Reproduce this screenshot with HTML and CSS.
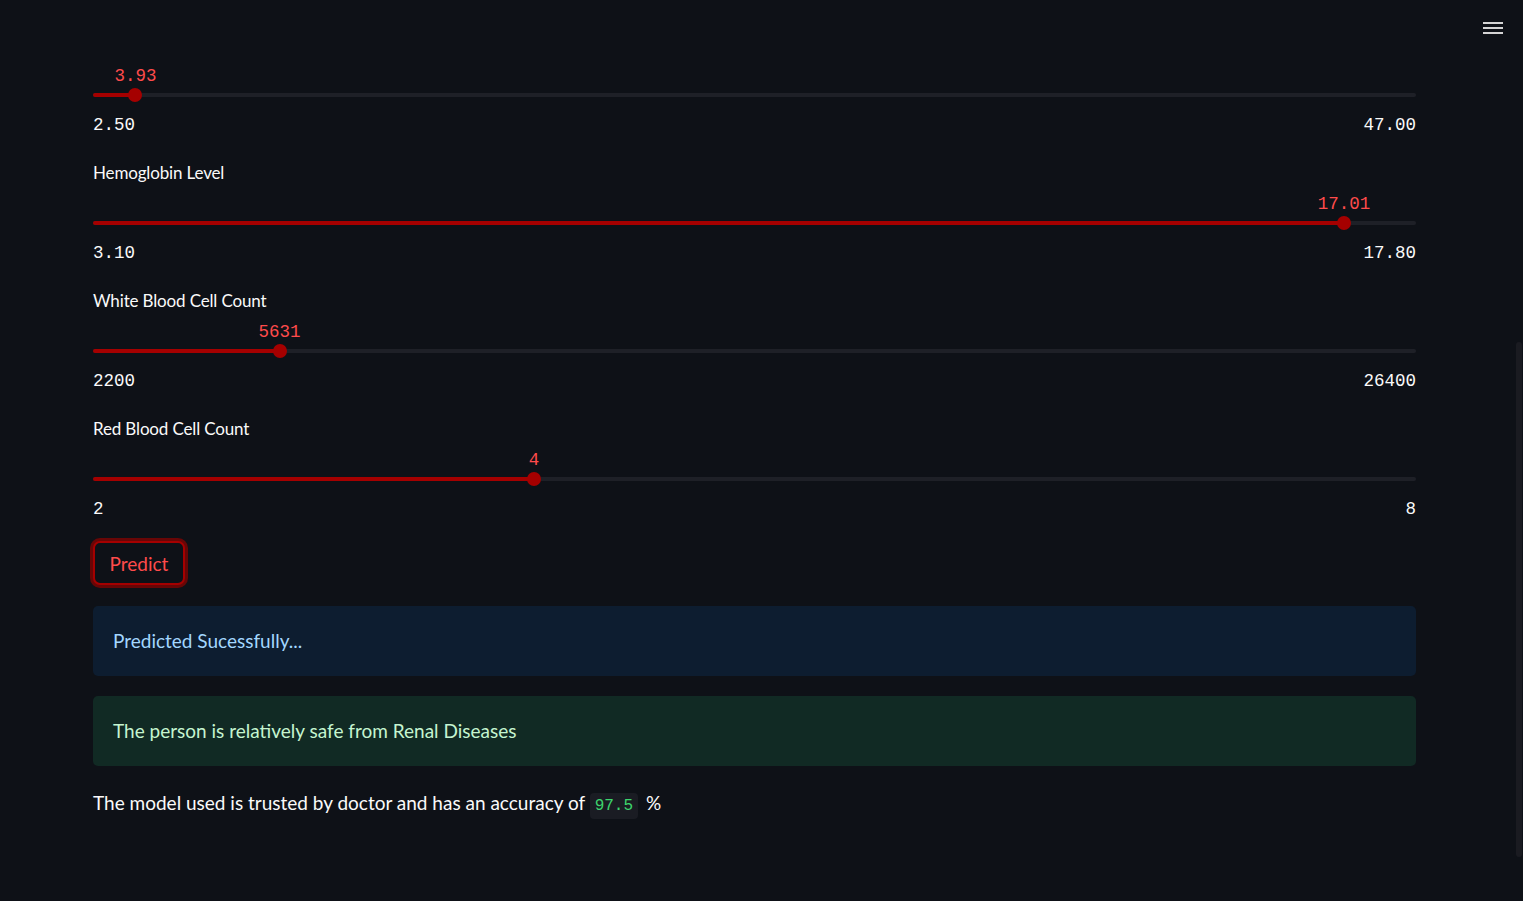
FILE: index.html
```html
<!DOCTYPE html>
<html>
<head>
<meta charset="utf-8">
<link rel="stylesheet" href="styles.css">
</head>
<body>
<div class="menu">
  <svg width="20" height="16" viewBox="0 0 20 16"><rect x="0" y="2" width="20" height="2" fill="#d4d4d4"/><rect x="0" y="7" width="20" height="2" fill="#d4d4d4"/><rect x="0" y="12" width="20" height="2" fill="#d4d4d4"/></svg>
</div>
<div class="scroll-thumb"></div>
<main class="main">
  <div class="slider-block first">
    <div class="slider">
      <div class="value-row"><span class="value" style="left:3.21%">3.93</span></div>
      <div class="track-wrap">
        <div class="track"></div>
        <div class="fill" style="width:3.21%"></div>
        <div class="thumb" style="left:3.21%"></div>
      </div>
      <div class="ticks"><span>2.50</span><span>47.00</span></div>
    </div>
  </div>

  <div class="slider-block">
    <div class="label">Hemoglobin Level</div>
    <div class="slider">
      <div class="value-row"><span class="value" style="left:94.56%">17.01</span></div>
      <div class="track-wrap">
        <div class="track"></div>
        <div class="fill" style="width:94.56%"></div>
        <div class="thumb" style="left:94.56%"></div>
      </div>
      <div class="ticks"><span>3.10</span><span>17.80</span></div>
    </div>
  </div>

  <div class="slider-block">
    <div class="label">White Blood Cell Count</div>
    <div class="slider">
      <div class="value-row"><span class="value" style="left:14.1%">5631</span></div>
      <div class="track-wrap">
        <div class="track"></div>
        <div class="fill" style="width:14.1%"></div>
        <div class="thumb" style="left:14.1%"></div>
      </div>
      <div class="ticks"><span>2200</span><span>26400</span></div>
    </div>
  </div>

  <div class="slider-block">
    <div class="label">Red Blood Cell Count</div>
    <div class="slider">
      <div class="value-row"><span class="value" style="left:33.33%">4</span></div>
      <div class="track-wrap">
        <div class="track"></div>
        <div class="fill" style="width:33.33%"></div>
        <div class="thumb" style="left:33.33%"></div>
      </div>
      <div class="ticks"><span>2</span><span>8</span></div>
    </div>
  </div>

  <button class="predict">Predict</button>

  <div class="alert info">Predicted Sucessfully...</div>
  <div class="alert success">The person is relatively safe from Renal Diseases</div>

  <p class="accuracy">The model used is trusted by doctor and has an accuracy of <code class="code">97.5</code> %</p>
</main>
</body>
</html>
```

FILE: styles.css
```css
* { box-sizing: border-box; }
html, body {
  margin: 0;
  padding: 0;
  background: #0e1117;
  height: 100%;
  overflow: hidden;
}
body {
  font-family: "Lato", "Noto Sans", sans-serif;
  color: #fafafa;
}
.menu {
  position: absolute;
  top: 20px;
  right: 20px;
  width: 20px;
  height: 16px;
}
.menu svg { display: block; }
.scroll-thumb {
  position: absolute;
  right: 1px;
  top: 342px;
  width: 6px;
  height: 515px;
  border-radius: 3px;
  background: #1a1b21;
}
.main {
  width: 1323px;
  margin-left: 93px;
  display: flex;
  flex-direction: column;
}
.slider-block {
  display: flex;
  flex-direction: column;
  margin-bottom: 28px;
}
.slider-block.first { padding-top: 65px; }
.label {
  height: 22px;
  line-height: 22px;
  font-size: 17px;
  margin-bottom: 9px;
  letter-spacing: -0.15px;
}
.slider { display: flex; flex-direction: column; }
.value-row {
  position: relative;
  height: 20px;
  margin-bottom: 3px;
}
.value {
  position: absolute;
  top: 1px;
  transform: translateX(-50%);
  font-family: "Liberation Mono", monospace;
  font-size: 17.5px;
  line-height: 20px;
  color: #ff4b4b;
  white-space: nowrap;
}
.track-wrap {
  position: relative;
  height: 14px;
  margin-bottom: 12px;
}
.track {
  position: absolute;
  left: 0; right: 0;
  top: 5px;
  height: 4px;
  border-radius: 2px;
  background: #1e2027;
}
.fill {
  position: absolute;
  left: 0;
  top: 5px;
  height: 4px;
  border-radius: 2px;
  background: #a50000;
}
.thumb {
  position: absolute;
  top: 0;
  width: 14px;
  height: 14px;
  margin-left: -7px;
  border-radius: 50%;
  background: #a50000;
}
.ticks {
  display: flex;
  justify-content: space-between;
  height: 20px;
  padding-top: 1px;
  line-height: 20px;
  font-family: "Liberation Mono", monospace;
  font-size: 17.5px;
  color: #fafafa;
}
.predict {
  align-self: flex-start;
  margin-top: -5px;
  width: 92px;
  height: 44px;
  border: 2px solid #a50000;
  border-radius: 7px;
  box-shadow: 0 0 0 3px #680606;
  background: #0e1117;
  color: #ff4b4b;
  font-family: "Lato", "Noto Sans", sans-serif;
  font-size: 19px;
  padding: 0;
  margin-bottom: 21px;
}
.alert {
  height: 70px;
  display: flex;
  align-items: center;
  padding: 0 20px 1px;
  border-radius: 5px;
  font-size: 19px;
  margin-bottom: 20px;
}
.info {
  background: #0d1d30;
  color: #a3d7ff;
}
.success {
  background: #112a24;
  color: #c5f5d0;
}
.accuracy {
  margin: 5px 0 0;
  font-size: 19px;
  line-height: 24px;
}
.code {
  display: inline-block;
  font-family: "Liberation Mono", monospace;
  font-size: 16px;
  line-height: 26px;
  padding: 0 5px;
  margin: 0 3px 0 0;
  border-radius: 4px;
  background: #1a1c23;
  color: #3dd56d;
}
```
